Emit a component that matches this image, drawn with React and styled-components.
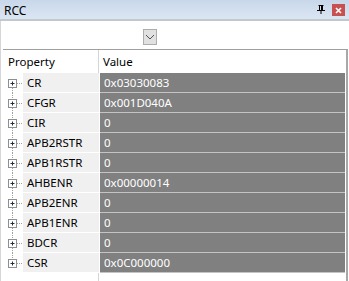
import * as React from "react";
import styled, { createGlobalStyle } from "styled-components";

const GlobalStyle = createGlobalStyle`
  html, body {
    margin: 0;
    padding: 0;
    background: #ffffff;
  }
  body {
    font-family: "Segoe UI", "Noto Sans", sans-serif;
    font-size: 11.5px;
  }
`;

const registers = [
    { name: "CR", value: "0x03030083" },
    { name: "CFGR", value: "0x001D040A" },
    { name: "CIR", value: "0" },
    { name: "APB2RSTR", value: "0" },
    { name: "APB1RSTR", value: "0" },
    { name: "AHBENR", value: "0x00000014" },
    { name: "APB2ENR", value: "0" },
    { name: "APB1ENR", value: "0" },
    { name: "BDCR", value: "0" },
    { name: "CSR", value: "0x0C000000" },
];

export default function App() {
    return (
        <Panel>
            <GlobalStyle />
            <TitleBar>
                <Title>RCC</Title>
                <TitleButtons>
                    <PinIcon />
                    <CloseButton>
                        <svg width="7" height="7" viewBox="0 0 7 7">
                            <path d="M1 1 L6 6 M6 1 L1 6" stroke="#fff" strokeWidth="1.6" />
                        </svg>
                    </CloseButton>
                </TitleButtons>
            </TitleBar>
            <Body>
                <Toolbar>
                    <DropButton>
                        <svg width="10" height="6" viewBox="0 0 10 6">
                            <path d="M1 1 L5 5 L9 1" fill="none" stroke="#555" strokeWidth="1" />
                        </svg>
                    </DropButton>
                </Toolbar>
                <Grid>
                    <HeaderRow>
                        <HeaderCell $first>Property</HeaderCell>
                        <HeaderCell>Value</HeaderCell>
                    </HeaderRow>
                    {registers.map((reg, i) => (
                        <Row key={reg.name}>
                            <Gutter>
                                <TreeNode first={i === 0} last={i === registers.length - 1} />
                            </Gutter>
                            <NameCell>{reg.name}</NameCell>
                            <ValueCell>{reg.value}</ValueCell>
                        </Row>
                    ))}
                    <Filler>
                        <FillerGutter />
                        <FillerValue />
                    </Filler>
                </Grid>
            </Body>
        </Panel>
    );
}

function PinIcon() {
    return (
        <svg width="9" height="9" viewBox="0 0 9 9">
            <path d="M2.5 0.5 H7.5 M3.5 0.5 V5.5 M6.5 0.5 V5.5 M1 5.5 H9 M5 5.5 V9" fill="none" stroke="#000" strokeWidth="1" />
            <rect x="5" y="1" width="1" height="4" fill="#000" />
        </svg>
    );
}

function TreeNode({ first, last }) {
    return (
        <svg width="20" height="20" viewBox="0 0 20 20">
            {!first && <line x1="9.5" y1="0" x2="9.5" y2="6" stroke="#a0a0a0" strokeDasharray="1 1" />}
            {!last && <line x1="9.5" y1="15" x2="9.5" y2="20" stroke="#a0a0a0" strokeDasharray="1 1" />}
            <line x1="14" y1="10.5" x2="20" y2="10.5" stroke="#a0a0a0" strokeDasharray="1 1" />
            <rect x="5.5" y="6.5" width="8" height="8" fill="#fff" stroke="#8e8f8f" />
            <path d="M7.5 10.5 H11.5 M9.5 8.5 V12.5" stroke="#1c2f4a" strokeWidth="1" />
        </svg>
    );
}

const Panel = styled.div`
    width: 349px;
    height: 281px;
    display: flex;
    flex-direction: column;
    overflow: hidden;
`;

const TitleBar = styled.div`
    height: 19px;
    display: flex;
    align-items: center;
    justify-content: space-between;
    padding: 0 4px;
    background: linear-gradient(#c8d7e9, #dbe6f3);
    border-bottom: 2px solid #c3c8cf;
`;

const Title = styled.div`
    font-size: 12px;
    color: #000;
    padding-top: 1px;
`;

const TitleButtons = styled.div`
    display: flex;
    align-items: center;
    gap: 7px;
`;

const CloseButton = styled.div`
    width: 13px;
    height: 12px;
    margin-top: 1px;
    background: #c75050;
    display: flex;
    align-items: center;
    justify-content: center;
`;

const Body = styled.div`
    flex: 1;
    display: flex;
    flex-direction: column;
    border-left: 1px solid #d6d6d6;
    padding-left: 2px;
    padding-right: 1px;
`;

const Toolbar = styled.div`
    height: 28px;
    display: flex;
    align-items: flex-start;
    padding: 8px 0 0 140px;
    box-sizing: border-box;
`;

const DropButton = styled.div`
    width: 14px;
    height: 16px;
    box-sizing: border-box;
    background: #e1e1e1;
    border: 1px solid #adadad;
    display: flex;
    align-items: center;
    justify-content: center;
`;

const Grid = styled.div`
    flex: 1;
    display: flex;
    flex-direction: column;
    border-top: 1px solid #a0a0a0;
    border-right: 2px solid #a8a8a8;
    padding-right: 1px;
`;

const HeaderRow = styled.div`
    height: 23px;
    display: grid;
    grid-template-columns: 96px 1fr;
    align-items: center;
`;

const HeaderCell = styled.div`
    height: 100%;
    display: flex;
    align-items: center;
    padding-left: ${(p) => (p.$first ? "5px" : "4px")};
    border-right: ${(p) => (p.$first ? "1px solid #d5d5d5" : "none")};
    color: #000;
`;

const Row = styled.div`
    height: 20px;
    display: grid;
    grid-template-columns: 20px 76px 1px 1fr;
`;

const Gutter = styled.div`
    grid-column: 1;
    height: 20px;
    line-height: 0;
`;

const NameCell = styled.div`
    grid-column: 2;
    height: 19px;
    background: #f0f0f0;
    padding-left: 4px;
    display: flex;
    align-items: center;
    color: #000;
    white-space: nowrap;
`;

const ValueCell = styled.div`
    grid-column: 4;
    height: 19px;
    background: #808080;
    border-bottom: 1px solid #c4c4c4;
    padding-left: 4px;
    display: flex;
    align-items: center;
    color: #ffffff;
`;

const Filler = styled.div`
    flex: 1;
    display: grid;
    grid-template-columns: 96px 1fr;
`;

const FillerGutter = styled.div`
    border-right: 1px solid #d5d5d5;
`;

const FillerValue = styled.div``;
